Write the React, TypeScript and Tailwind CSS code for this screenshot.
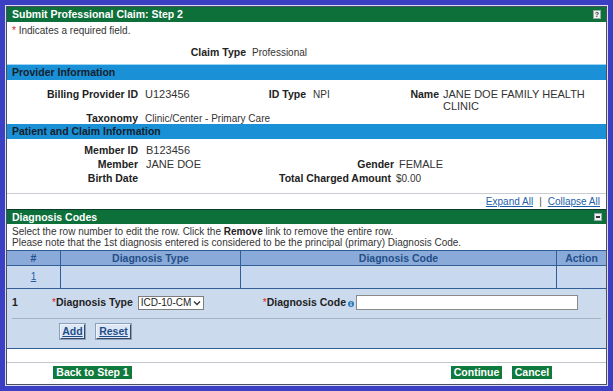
import React from 'react';

const lbl = 'font-bold text-[10.5px] text-[#222] text-right leading-[12px]';
const big = 'text-[11px] text-[#333] leading-[12px]';

function Field({ label, value, labelW, gap, big: isBig }: { label: string; value: string; labelW: string; gap: string; big?: boolean }) {
  return (
    <div className="flex items-baseline">
      <span className={`${lbl} ${labelW} shrink-0`}>{label}</span>
      <span className={`${gap} ${isBig ? big : 'text-[10px] leading-[12px]'}`}>{value}</span>
    </div>
  );
}

export default function App() {
  return (
    <div className="w-[613px] h-[391px] bg-[#3b3fc4] p-[5px] font-['Liberation_Sans',Arial,sans-serif] text-[10px] text-[#222]">
      <div className="h-full border border-[#d9dcef]">
        <div className="h-full border border-[#4b4f63] bg-white flex flex-col">
          {/* title bar */}
          <div className="h-[15px] shrink-0 bg-[#0d6f3a] flex items-center justify-between pl-[5px] pr-[5px]">
            <span className="text-white font-bold text-[10.5px] leading-none">Submit Professional Claim: Step 2</span>
            <span className="w-[8px] h-[9px] bg-[#f2f2f2] border border-[#9aa] flex items-center justify-center text-[7px] font-bold text-[#333] leading-none">?</span>
          </div>

          {/* required + claim type */}
          <div className="h-[42px] shrink-0 pt-[3px]">
            <div className="pl-[5px] leading-[12px] text-[#333]">
              <span className="text-[#d22]">*</span> Indicates a required field.
            </div>
            <div className="mt-[9px] flex items-baseline">
              <span className={`${lbl} w-[239px]`}>Claim Type</span>
              <span className="ml-[6px] leading-[12px] text-[#333]">Professional</span>
            </div>
          </div>

          {/* provider */}
          <div className="h-[16px] shrink-0 border-t border-[#9bd4f2] bg-[#1a90d7] flex items-center pl-[5px]">
            <span className="font-bold text-[10.5px] text-[#16202b] leading-none">Provider Information</span>
          </div>
          <div className="h-[44px] shrink-0 pt-[8px]">
            <div className="flex items-baseline">
              <span className={`${lbl} w-[131px] shrink-0`}>Billing Provider ID</span>
              <span className={`${big} ml-[7px] w-[100px] shrink-0`}>U123456</span>
              <span className={`${lbl} w-[61px] shrink-0`}>ID Type</span>
              <span className="ml-[7px] w-[96px] shrink-0 leading-[12px] text-[#333]">NPI</span>
              <span className={`${lbl} w-[30px] shrink-0`}>Name</span>
              <span className={`${big} ml-[4px] flex-1 pr-[6px]`}>JANE DOE FAMILY HEALTH CLINIC</span>
            </div>
            <Field label="Taxonomy" value="Clinic/Center - Primary Care" labelW="w-[131px]" gap="ml-[7px] text-[#333]" />
          </div>

          {/* patient */}
          <div className="h-[15px] shrink-0 bg-[#1a90d7] flex items-center pl-[5px]">
            <span className="font-bold text-[10.5px] text-[#16202b] leading-none">Patient and Claim Information</span>
          </div>
          <div className="h-[55px] shrink-0 pt-[5px] border-b border-[#c9ccd2]">
            <div className="h-[14px] flex items-baseline">
              <span className={`${lbl} w-[131px] shrink-0`}>Member ID</span>
              <span className={`${big} ml-[8px]`}>B123456</span>
            </div>
            <div className="h-[14px] flex items-baseline">
              <span className={`${lbl} w-[131px] shrink-0`}>Member</span>
              <span className={`${big} ml-[8px] w-[119px] shrink-0`}>JANE DOE</span>
              <span className={`${lbl} w-[129px] shrink-0`}>Gender</span>
              <span className={`${big} ml-[5px]`}>FEMALE</span>
            </div>
            <div className="h-[14px] flex items-baseline">
              <span className={`${lbl} w-[131px] shrink-0`}>Birth Date</span>
              <span className="ml-[8px] w-[119px] shrink-0" />
              <span className={`${lbl} w-[126px] shrink-0`}>Total Charged Amount</span>
              <span className="ml-[5px] leading-[12px] text-[#333]">$0.00</span>
            </div>
          </div>

          {/* expand / collapse */}
          <div className="h-[15px] shrink-0 flex items-center justify-end pr-[6px] text-[10px] leading-none">
            <a className="text-[#1e5fa8] underline">Expand All</a>
            <span className="mx-[6px] text-[#555]">|</span>
            <a className="text-[#1e5fa8] underline">Collapse All</a>
          </div>

          {/* diagnosis codes */}
          <div className="h-[15px] shrink-0 border-t border-[#0b3b2a] bg-[#0d6f3a] flex items-center justify-between pl-[5px] pr-[4px]">
            <span className="text-white font-bold text-[10.5px] leading-none">Diagnosis Codes</span>
            <span className="w-[8px] h-[8px] bg-[#f2f2f2] border border-[#9aa] flex items-center justify-center">
              <span className="w-[4px] h-[1.5px] bg-[#333]" />
            </span>
          </div>
          <div className="h-[26px] shrink-0 pt-[2px] pl-[5px] leading-[11px] text-[#333]">
            <div>
              Select the row number to edit the row. Click the <b className="text-[#222]">Remove</b> link to remove the entire row.
            </div>
            <div>Please note that the 1st diagnosis entered is considered to be the principal (primary) Diagnosis Code.</div>
          </div>

          {/* table */}
          <div className="h-[16px] shrink-0 grid grid-cols-[53px_180px_316px_1fr] border-y border-[#2f5f96] bg-[#8aabd9] text-[10.5px] font-bold text-[#244f88] leading-none">
            <div className="flex items-center justify-center">#</div>
            <div className="flex items-center justify-center border-l border-[#2f5f96]">Diagnosis Type</div>
            <div className="flex items-center justify-center border-l border-[#2f5f96]">Diagnosis Code</div>
            <div className="flex items-center justify-center border-l border-[#2f5f96]">Action</div>
          </div>
          <div className="h-[22px] shrink-0 grid grid-cols-[53px_180px_316px_1fr] bg-[#c8d8ee]">
            <div className="flex items-center justify-center">
              <a className="text-[#1e5fa8] underline leading-none">1</a>
            </div>
            <div className="border-l border-[#2f5f96]" />
            <div className="border-l border-[#2f5f96]" />
            <div className="border-l border-[#2f5f96]" />
          </div>

          {/* edit row */}
          <div className="h-[61px] shrink-0 border-y border-[#2f5f96] bg-[#ccdaee] pt-[6px]">
            <div className="h-[15px] flex items-center pl-[5px]">
              <span className="w-[40px] font-bold text-[10.5px] leading-none">1</span>
              <span className="text-[#d22] leading-none">*</span>
              <span className="font-bold text-[10.5px] leading-none">Diagnosis Type</span>
              <div className="ml-[5px] w-[66px] h-[14px] bg-white border border-[#7d7d7d] flex items-center justify-between px-[2px]">
                <span className="text-[10px] leading-none text-[#222]">ICD-10-CM</span>
                <svg width="8" height="6" viewBox="0 0 8 6">
                  <path d="M1 1.5 L4 4.5 L7 1.5" fill="none" stroke="#333" strokeWidth="1.3" />
                </svg>
              </div>
              <span className="ml-[59px] text-[#d22] leading-none">*</span>
              <span className="font-bold text-[10.5px] leading-none">Diagnosis Code</span>
              <svg className="ml-[2px] mt-[3px]" width="6" height="6" viewBox="0 0 6 6">
                <circle cx="3" cy="3" r="3" fill="#2d7cb8" />
                <rect x="2.5" y="2.4" width="1" height="2.6" fill="#fff" />
                <rect x="2.5" y="1" width="1" height="0.9" fill="#fff" />
              </svg>
              <div className="ml-[2px] w-[222px] h-[15px] bg-white border border-[#8a8a8a]" />
            </div>
            <div className="mt-[8px] mx-[5px] h-px bg-[#a7b3c4]" />
            <div className="mt-[5px] flex gap-[11px] ml-[53px]">
              <button className="h-[15px] w-[25px] bg-[#dde7f5] border border-t-[#eef3fa] border-l-[#eef3fa] border-r-[#3b4a5e] border-b-[#3b4a5e] outline outline-1 outline-[#8aa0bd] text-[10.5px] font-bold text-[#1f4f8a] underline leading-none">
                Add
              </button>
              <button className="h-[15px] w-[35px] bg-[#dde7f5] border border-t-[#eef3fa] border-l-[#eef3fa] border-r-[#3b4a5e] border-b-[#3b4a5e] outline outline-1 outline-[#8aa0bd] text-[10.5px] font-bold text-[#1f4f8a] underline leading-none">
                Reset
              </button>
            </div>
          </div>

          <div className="h-[13px] shrink-0" />

          {/* footer */}
          <div className="flex-1 border-t border-[#c3c6cc] pt-[3px] flex items-start justify-between pl-[46px] pr-[54px]">
            <button className="h-[13px] w-[79px] bg-[#0f7a3d] text-white font-bold text-[10.5px] leading-none">Back to Step 1</button>
            <div className="flex gap-[10px]">
              <button className="h-[13px] w-[51px] bg-[#0f7a3d] text-white font-bold text-[10.5px] leading-none">Continue</button>
              <button className="h-[13px] w-[40px] bg-[#0f7a3d] text-white font-bold text-[10.5px] leading-none">Cancel</button>
            </div>
          </div>
        </div>
      </div>
    </div>
  );
}
